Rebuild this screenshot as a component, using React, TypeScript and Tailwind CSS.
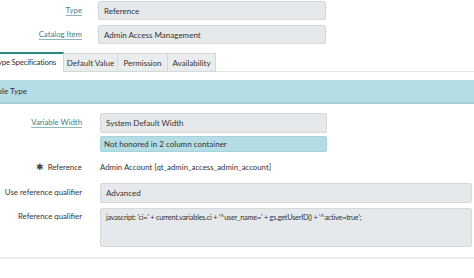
const font = { fontFamily: "Lato, 'Open Sans', sans-serif" };

const Label = ({ children, link }: { children: React.ReactNode; link?: boolean }) => (
  <div className="w-[82px] shrink-0 whitespace-nowrap text-right text-[7.8px] leading-none">
    {link ? (
      <span className="text-[#3d7f86] underline decoration-[#8fb7bb] underline-offset-2">{children}</span>
    ) : (
      <span className="text-[#333]">{children}</span>
    )}
  </div>
);

const Box = ({ children, className = "" }: { children: React.ReactNode; className?: string }) => (
  <div
    className={`flex items-center whitespace-nowrap rounded-[2px] border border-[#d6d9db] bg-[#e6e9eb] px-[5px] text-[8px] text-[#333] ${className}`}
  >
    {children}
  </div>
);

export default function App() {
  return (
    <div className="h-[278px] w-[474px] overflow-hidden bg-white" style={font}>
      {/* Top fields */}
      <div className="flex items-center gap-[16px] pt-[1px]">
        <Label link>Type</Label>
        <Box className="h-[19px] w-[228px]">Reference</Box>
      </div>
      <div className="mt-[5px] flex items-center gap-[16px]">
        <Label link>Catalog Item</Label>
        <Box className="h-[19px] w-[228px]">Admin Access Management</Box>
      </div>

      {/* Tabs */}
      <div className="mt-[8px] flex h-[20px] items-end">
        <div className="flex h-[20px] w-[64px] items-center justify-end overflow-hidden border-t-2 border-r border-[#2f8783] border-r-[#d6d9db] bg-white pr-[7px] text-[7.8px] text-[#333]">
          <span className="whitespace-nowrap tracking-[-0.2px]">Type Specifications</span>
        </div>
        <div className="flex h-[19px] w-[54px] items-center justify-center border-t border-r border-b border-[#d3d8d9] bg-[#e9eded] text-[8px] text-[#333]">
          Default Value
        </div>
        <div className="flex h-[19px] w-[50px] items-center justify-center border-t border-r border-b border-[#d3d8d9] bg-[#e9eded] text-[8px] text-[#333]">
          Permission
        </div>
        <div className="flex h-[19px] w-[48px] items-center justify-center border-t border-r border-b border-[#d3d8d9] bg-[#e9eded] text-[8px] text-[#333]">
          Availability
        </div>
        <div className="h-[1px] flex-1 bg-[#e1e4e5]" />
      </div>

      {/* Section header */}
      <div className="mt-[8px] flex h-[24px] items-center overflow-hidden border-b-2 border-[#a3cfd6] bg-[#b5dde5] text-[8px] text-[#333]">
        <span className="ml-[-20px] whitespace-nowrap">Variable Type</span>
      </div>

      {/* Fields */}
      <div className="mt-[9px] flex items-center gap-[18px]">
        <Label link>Variable Width</Label>
        <Box className="h-[20px] w-[227px]">System Default Width</Box>
      </div>
      <div className="mt-[3px] flex gap-[18px]">
        <div className="w-[82px] shrink-0" />
        <div className="flex h-[16px] w-[227px] items-center rounded-[2px] border border-[#a6d2da] bg-[#b4dde5] px-[3px] text-[8px] text-[#333]">
          Not honored in 2 column container
        </div>
      </div>
      <div className="mt-[10px] flex items-center gap-[18px]">
        <div className="flex w-[82px] shrink-0 items-center justify-end gap-[4px] text-[7.8px] leading-none text-[#333]">
          <span className="text-[9px] text-[#444]" style={{ fontFamily: "'DejaVu Sans', sans-serif" }}>
            ✱
          </span>
          <span>Reference</span>
        </div>
        <div className="text-[7.8px] text-[#333]">Admin Account [qt_admin_access_admin_account]</div>
      </div>
      <div className="mt-[9px] flex items-center gap-[18px]">
        <Label>Use reference qualifier</Label>
        <Box className="h-[20px] w-[372px]">Advanced</Box>
      </div>
      <div className="mt-[5px] flex gap-[18px]">
        <div className="w-[82px] shrink-0 pt-[5px]">
          <Label>Reference qualifier</Label>
        </div>
        <div className="h-[39px] w-[372px] rounded-[2px] border border-[#d6d9db] bg-[#e6e9eb] px-[5px] pt-[5px] text-[7.4px] leading-none tracking-[-0.25px] whitespace-nowrap text-[#333]">
          javascript: 'ci=' + current.variables.ci + '^user_name=' + gs.getUserID() + '^active=true';
        </div>
      </div>

      <div className="mt-[10px] h-[2px] w-full bg-[#eceeef]" />
    </div>
  );
}
